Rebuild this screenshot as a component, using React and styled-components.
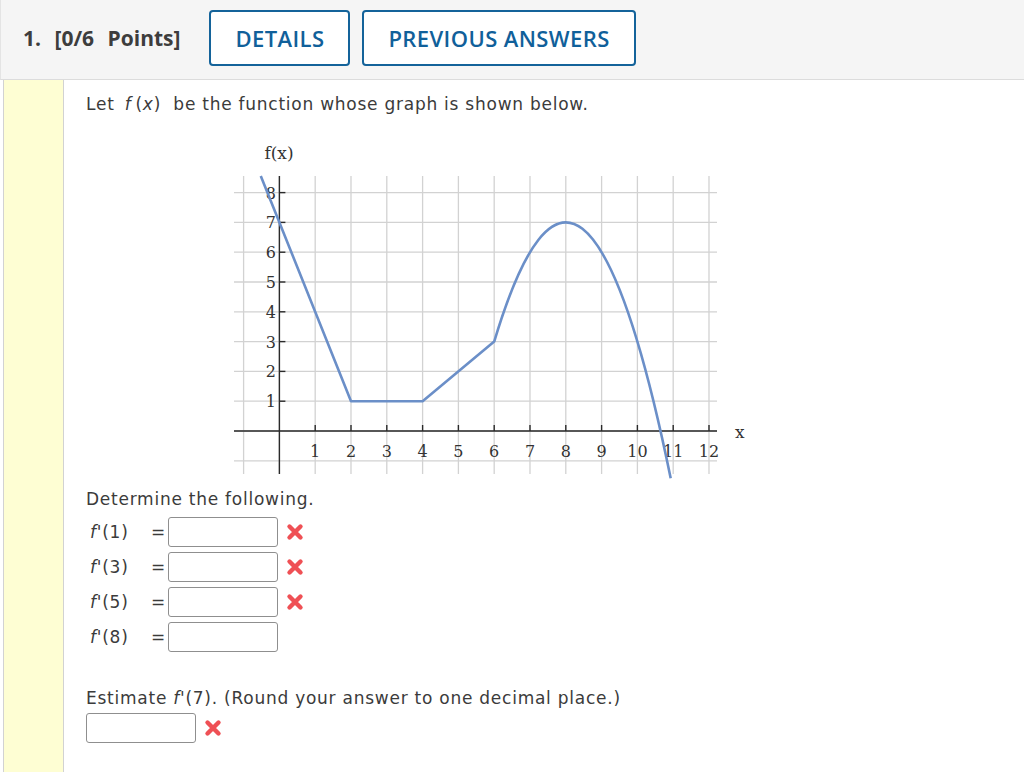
import React from "react";
import styled, { createGlobalStyle } from "styled-components";

const GlobalStyle = createGlobalStyle`
  html, body {
    margin: 0;
    padding: 0;
    background: #ffffff;
  }
  body {
    font-family: "DejaVu Sans", Verdana, sans-serif;
    color: #3b3b3b;
  }
`;

const Page = styled.div`
  min-height: 100vh;
  display: flex;
  flex-direction: column;
`;

const Header = styled.header`
  height: 80px;
  box-sizing: border-box;
  padding: 10px 0 0 22px;
  background: #f5f5f5;
  border-bottom: 1px solid #dcdcdc;
  border-left: 1px solid #e4e4e4;
  display: flex;
  align-items: flex-start;
`;

const Title = styled.h1`
  margin: 0 29px 0 0;
  height: 56px;
  display: flex;
  align-items: center;
  font-family: "Open Sans", sans-serif;
  font-size: 21px;
  font-weight: 700;
  color: #3d3d3d;
  word-spacing: 8px;
`;

const HeadButton = styled.button`
  height: 56px;
  box-sizing: border-box;
  margin-right: 12px;
  padding: 0 24px;
  background: #ffffff;
  border: 2px solid #14639a;
  border-radius: 4px;
  font-family: "Open Sans", sans-serif;
  font-size: 22px;
  font-weight: 600;
  color: #10609a;
  letter-spacing: 0.4px;
`;

const Body = styled.div`
  flex: 1;
  display: flex;
`;

const Gutter = styled.div`
  width: 59px;
  margin-left: 3px;
  background: #fefed3;
  border-left: 1px solid #d2d2d2;
  border-right: 1px solid #d2d2d2;
`;

const Content = styled.main`
  flex: 1;
  padding: 14px 0 0 22px;
  font-size: 17px;
  line-height: 20px;
  letter-spacing: 0.75px;
`;

const Para = styled.p`
  margin: ${(p) => p.$mt || 0}px 0 0 0;
`;

const Math = styled.i`
  margin: 0 ${(p) => p.$space || 0}px;
`;

const Graph = styled.svg`
  display: block;
  margin: 22px 0 0 143px;
  overflow: visible;
  letter-spacing: 0;
`;

const Rows = styled.div`
  margin-top: 8px;
  display: flex;
  flex-direction: column;
  gap: 5px;
`;

const Row = styled.div`
  display: flex;
  align-items: center;
  height: 30px;
`;

const Label = styled.span`
  width: 61px;
  padding-left: 4px;
  white-space: nowrap;
`;

const Eq = styled.span`
  width: 17px;
`;

const Answer = styled.input`
  width: 110px;
  height: 30px;
  box-sizing: border-box;
  margin: 0;
  border: 1px solid #8f8f8f;
  border-radius: 3px;
  background: #fff;
  padding: 0 4px;
`;

const Mark = styled.svg`
  margin-left: 8px;
  flex: none;
`;

const Estimate = styled.div`
  margin-top: 5px;
  display: flex;
  align-items: center;
`;

const UX = 35.8;
const UY = 29.8;
const OX = 50.4;
const OY = 295;
const px = (x) => OX + UX * x;
const py = (y) => OY - UY * y;

function Wrong() {
  return (
    <Mark width="18" height="18" viewBox="0 0 18 18">
      <path d="M3.5 3.5 L14.5 14.5 M14.5 3.5 L3.5 14.5" stroke="#ef5055" strokeWidth="4.4" strokeLinecap="round" />
    </Mark>
  );
}

function Plot() {
  const xs = [-1, 0, 1, 2, 3, 4, 5, 6, 7, 8, 9, 10, 11, 12];
  const ys = [-1, 0, 1, 2, 3, 4, 5, 6, 7, 8];
  const curve =
    `M${px(-0.52)} ${py(8.56)} L${px(2)} ${py(1)} L${px(4)} ${py(1)} L${px(6)} ${py(3)} ` +
    `Q${px(8.465)} ${py(12.86)} ${px(10.93)} ${py(-1.585)}`;
  return (
    <Graph width="520" height="345" viewBox="0 0 520 345">
      <g stroke="#d2d2d2" strokeWidth="1.3">
        {xs.map((x) => (
          <line key={"v" + x} x1={px(x)} x2={px(x)} y1="40" y2="338" />
        ))}
        {ys.map((y) => (
          <line key={"h" + y} x1="5" x2="488" y1={py(y)} y2={py(y)} />
        ))}
      </g>
      <g stroke="#2a2a2a" strokeWidth="1.4">
        <line x1={px(0)} x2={px(0)} y1="40" y2="338" />
        <line x1="5" x2="488" y1={OY} y2={OY} />
        {xs.filter((x) => x > 0).map((x) => (
          <line key={"tx" + x} x1={px(x)} x2={px(x)} y1={OY - 6} y2={OY} />
        ))}
        {ys.filter((y) => y > 0).map((y) => (
          <line key={"ty" + y} x1={OX} x2={OX + 6} y1={py(y)} y2={py(y)} />
        ))}
      </g>
      <g fontFamily="'DejaVu Serif', serif" fontSize="16" fill="#333">
        {xs.filter((x) => x > 0).map((x) => (
          <text key={"lx" + x} x={px(x)} y="321" textAnchor="middle">
            {x}
          </text>
        ))}
        {ys.filter((y) => y > 0).map((y) => (
          <text key={"ly" + y} x="47" y={py(y) + 6} textAnchor="end">
            {y}
          </text>
        ))}
        <text x="506" y="302" fontSize="17">x</text>
        <text x="50" y="23" fontSize="17" textAnchor="middle">f(x)</text>
      </g>
      <path d={curve} fill="none" stroke="#6b8fc8" strokeWidth="2.6" strokeLinejoin="round" />
    </Graph>
  );
}

const parts = [
  { n: 1, wrong: true },
  { n: 3, wrong: true },
  { n: 5, wrong: true },
  { n: 8, wrong: false },
];

export default function App() {
  return (
    <Page>
      <GlobalStyle />
      <Header>
        <Title>1. [0/6 Points]</Title>
        <HeadButton>DETAILS</HeadButton>
        <HeadButton>PREVIOUS ANSWERS</HeadButton>
      </Header>
      <Body>
        <Gutter />
        <Content>
          <Para>
            Let <Math $space={4}>f</Math>(<i>x</i>)&nbsp; be the function whose graph is shown below.
          </Para>
          <Plot />
          <Para $mt={8}>Determine the following.</Para>
          <Rows>
            {parts.map((p) => (
              <Row key={p.n}>
                <Label>
                  <i>f'</i>({p.n})
                </Label>
                <Eq>=</Eq>
                <Answer type="text" />
                {p.wrong && <Wrong />}
              </Row>
            ))}
          </Rows>
          <Para $mt={36}>
            Estimate <i>f'</i>(7). (Round your answer to one decimal place.)
          </Para>
          <Estimate>
            <Answer type="text" />
            <Wrong />
          </Estimate>
        </Content>
      </Body>
    </Page>
  );
}
